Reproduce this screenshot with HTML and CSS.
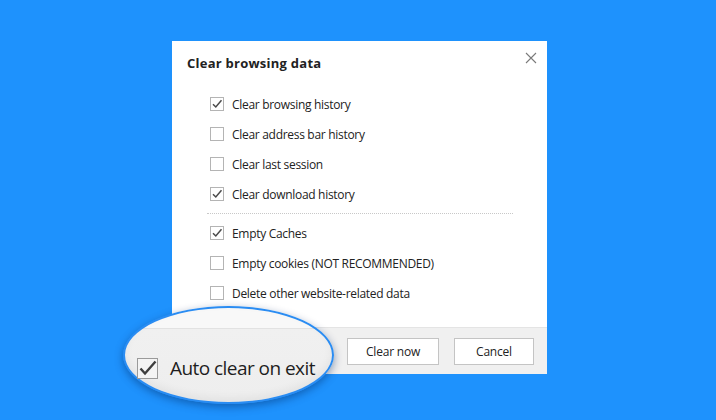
FILE: index.html
```html
<!DOCTYPE html>
<html>
<head>
<meta charset="utf-8">
<link rel="stylesheet" href="styles.css">
</head>
<body>
<div class="stage">
  <div class="dialog">
    <div class="header">
      <div class="title">Clear browsing data</div>
      <svg class="close" width="12" height="12" viewBox="0 0 12 12"><path d="M1 1L11 11M11 1L1 11" stroke="#7a7a7a" stroke-width="1.1" fill="none"/></svg>
    </div>
    <div class="body">
      <div class="group">
        <label class="row"><span class="cb on"><svg viewBox="0 0 14 14"><path d="M3 7.2L5.8 10L11.5 3.2" stroke="#4a4a4a" stroke-width="1.5" fill="none"/></svg></span>Clear browsing history</label>
        <label class="row"><span class="cb"></span>Clear address bar history</label>
        <label class="row"><span class="cb"></span>Clear last session</label>
        <label class="row"><span class="cb on"><svg viewBox="0 0 14 14"><path d="M3 7.2L5.8 10L11.5 3.2" stroke="#4a4a4a" stroke-width="1.5" fill="none"/></svg></span>Clear download history</label>
      </div>
      <div class="sep"></div>
      <div class="group">
        <label class="row"><span class="cb on"><svg viewBox="0 0 14 14"><path d="M3 7.2L5.8 10L11.5 3.2" stroke="#4a4a4a" stroke-width="1.5" fill="none"/></svg></span>Empty Caches</label>
        <label class="row"><span class="cb"></span>Empty cookies (NOT RECOMMENDED)</label>
        <label class="row"><span class="cb"></span>Delete other website-related data</label>
      </div>
    </div>
    <div class="footer">
      <button class="btn btn-clear">Clear now</button>
      <button class="btn btn-cancel">Cancel</button>
    </div>
  </div>
  <div class="magnifier">
    <span class="bigcb"><svg viewBox="0 0 21 21"><path d="M3.5 10.5L8 15.5L18.5 3.5" stroke="#3e3e3e" stroke-width="2.4" fill="none"/></svg></span>
    <span class="bigtext">Auto clear on exit</span>
  </div>
</div>
</body>
</html>
```

FILE: styles.css
```css
html, body {
  margin: 0;
  padding: 0;
}
body {
  width: 716px;
  height: 420px;
  background: #1e92fd;
  overflow: hidden;
  font-family: "Open Sans", "Noto Sans", sans-serif;
  color: #222;
}
.stage {
  position: relative;
  width: 716px;
  height: 420px;
  padding: 41px 0 0 172px;
  box-sizing: border-box;
}
.dialog {
  width: 375px;
  height: 333px;
  background: #fff;
  display: flex;
  flex-direction: column;
}
.header {
  height: 48px;
  display: flex;
  justify-content: space-between;
  padding: 0 10px 0 15px;
  box-sizing: border-box;
}
.title {
  font-size: 13px;
  font-weight: 700;
  margin-top: 13px;
  letter-spacing: 0.25px;
  color: #222;
}
.close {
  margin-top: 11px;
}
.body {
  flex: 1;
  padding: 0 34px 0 35px;
}
.group {
  display: flex;
  flex-direction: column;
}
.row {
  height: 30px;
  display: flex;
  align-items: center;
  font-size: 12px;
  color: #222;
  letter-spacing: -0.3px;
}
.cb {
  width: 12px;
  height: 12px;
  border: 1px solid #b4b4b4;
  background: #fff;
  margin: 0 8px 0 3px;
  flex: none;
  position: relative;
}
.cb svg {
  position: absolute;
  left: -1px;
  top: -1px;
  width: 14px;
  height: 14px;
}
.sep {
  margin: 4px 0 4px 0;
  height: 0;
  border-top: 1px dotted #c8c8c8;
}
.footer {
  height: 47px;
  background: #f0f0f0;
  border-top: 1px solid #e4e4e4;
  box-sizing: border-box;
  display: flex;
  justify-content: flex-end;
  align-items: flex-start;
  padding: 10px 13px 0 0;
  gap: 15px;
}
.btn {
  height: 27px;
  background: #fff;
  border: 1px solid #c4c4c4;
  font-family: "Open Sans", "Noto Sans", sans-serif;
  font-size: 12px;
  color: #222;
  padding: 0;
  letter-spacing: -0.2px;
}
.btn-clear { width: 92px; }
.btn-cancel { width: 80px; }
.magnifier {
  position: absolute;
  left: 123px;
  top: 306px;
  width: 211px;
  height: 98px;
  border-radius: 50%;
  border: 2px solid #2a8cf2;
  box-sizing: border-box;
  background: linear-gradient(to bottom, #f8f8f8 0, #f8f8f8 20px, #e2e2e2 20px, #e2e2e2 21px, #f0f0f0 21px, #eeeeee 100%);
  box-shadow: 0 3px 8px rgba(0, 40, 100, 0.45), inset 0 -4px 8px rgba(0, 0, 0, 0.05);
  display: flex;
  align-items: flex-start;
  padding: 50px 0 0 12px;
}
.bigcb {
  width: 19px;
  height: 19px;
  border: 1px solid #9a9a9a;
  background: #f4f4f4;
  position: relative;
  flex: none;
  margin-right: 12px;
}
.bigcb svg {
  position: absolute;
  left: -1px;
  top: -1px;
  width: 21px;
  height: 21px;
}
.bigtext {
  font-size: 19px;
  line-height: 21px;
  color: #1e1e1e;
  letter-spacing: -0.55px;
}
```
